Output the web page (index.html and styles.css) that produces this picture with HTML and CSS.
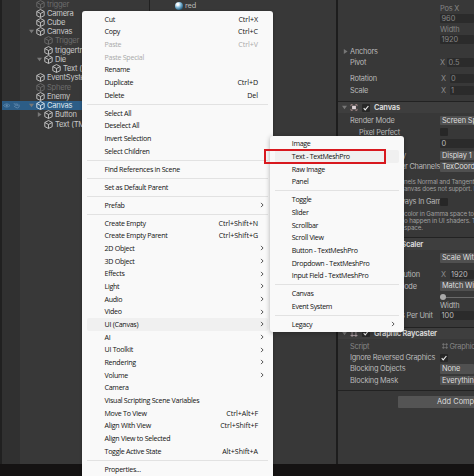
FILE: index.html
```html
<!DOCTYPE html>
<html lang="en">
<head>
<meta charset="utf-8">
<title>Editor</title>
<link rel="stylesheet" href="styles.css">
</head>
<body>
<svg class="defs" aria-hidden="true">
  <symbol id="cube" viewBox="0 0 8 8"><path d="M4 .5 7.3 2.2V5.9L4 7.5.7 5.9V2.2ZM.7 2.2 4 4 7.3 2.2M4 4V7.5" fill="none" stroke="currentColor" stroke-width=".8"/></symbol>
  <symbol id="check" viewBox="0 0 8 8"><path d="M1.7 4.2 3.2 5.8 6.4 2" fill="none" stroke="#eee" stroke-width="1.1"/></symbol>
  <symbol id="rect" viewBox="0 0 8 8"><path d="M0 1.8H8M0 6.2H8M1.8 0V8M6.2 0V8" fill="none" stroke="currentColor" stroke-width=".8"/></symbol>
  <symbol id="canvas" viewBox="0 0 8 8"><path d="M.5 2.5V.8H2.5M5.5 .8H7.5V2.5M7.5 5.5V7.2H5.5M2.5 7.2H.5V5.5" fill="none" stroke="#b99" stroke-width=".9"/><rect x="1.8" y="2" width="4.4" height="4" fill="#ddd0d4"/></symbol>
  <symbol id="chev" viewBox="0 0 4 6"><path d="M1 .9 3.1 3 1 5.1" fill="none" stroke="#222" stroke-width=".75"/></symbol>
</svg>
<div class="editor">
  <section class="tree" id="tree"></section>
  <section class="project"><i class="ball"></i><span>red</span></section>
  <section class="inspector" id="inspector"></section>
</div>
<nav class="menu main" id="main"></nav>
<nav class="menu sub" id="sub"></nav>
<div class="callout"></div>
<script src="app.js"></script>
</body>
</html>
```
FILE: styles.css
```css
* { box-sizing: border-box; }
body { margin: 0; width: 474px; height: 476px; overflow: hidden; position: relative; background: #151313; font-family: Inter, "Liberation Sans", sans-serif; }
.defs { position: absolute; width: 0; height: 0; }
.editor { display: flex; height: 464px; background: #383838; border-left: 2px solid #202020; }

.tree { width: 148px; border-right: 1px solid #202020; background: linear-gradient(to right, #303030 18px, #383838 18px); overflow: hidden; color: #c8c8c8; font-size: 7.6px; letter-spacing: -.26px; }
.node { height: 9.24px; display: flex; align-items: center; white-space: nowrap; }
.node:first-child { margin-top: -.6px; }
.node .vis { width: 18px; flex: none; display: flex; gap: 2px; padding-left: 1px; color: #648caf; }
.node .vis svg { width: 8px; height: 7px; }
.node.d0 { --in: 8px; } .node.d1 { --in: 16px; } .node.d2 { --in: 24px; }
.node .fold { width: 8px; margin-left: var(--in); flex: none; font-size: 0; display: flex; }
.fold svg, .foldrow svg { width: 5px; height: 5px; margin-left: 1px; fill: #777; }
.node .cube { width: 9px; height: 9px; margin-right: 2px; flex: none; }
.node.off { color: #6c6c6c; }
.node.sel { background: #2c5d87; color: #dce6ee; }

.project { width: 188px; border-right: 2px solid #1d1d1d; padding: 2px 0 0 25px; display: flex; align-items: flex-start; gap: 2px; color: #bbb; font-size: 7.3px; line-height: 8px; letter-spacing: -.1px; }
.ball { width: 8px; height: 8px; border-radius: 50%; background: radial-gradient(circle at 35% 30%, #fff 12%, #83b9d8 40%, #276183 75%); }

.inspector { width: 136px; flex: none; overflow: hidden; color: #b9b9b9; font-size: 7.4px; letter-spacing: -.22px; }
.row { display: flex; align-items: center; white-space: nowrap; padding-left: 12px; }
.row .label { width: 90px; flex: none; overflow: hidden; }
.row.indent .label { padding-left: 9px; }
.row.fit .label { letter-spacing: -.25px; }
.row.arrow .label { overflow: visible; }
.row .x { width: 7px; color: #8b8b8b; flex: none; }
.row.wide .x { width: 9.5px; padding-left: 1px; }
.dim { color: #858585; }
.field { width: 80px; height: 9px; line-height: 9px; background: #2b2b2b; border-radius: 1px; padding-left: 1.5px; letter-spacing: 0; }
.drop { width: 80px; height: 9.5px; line-height: 9.5px; background: #505050; color: #dedede; border-radius: 1px; padding-left: 2px; letter-spacing: -.12px; }
.box { width: 8px; height: 8px; background: #272727; border-radius: 1px; flex: none; }
.box svg { display: block; width: 8px; height: 8px; }
.head { background: #3e3e3e; border-top: 1px solid #222; font-weight: 700; color: #d4d4d4; padding-left: 4px; font-size: 7.4px; letter-spacing: -.2px; }
.head .fold { width: 8px; display: flex; }
.head .fold svg { margin-left: 0; }
.head .ico { width: 8px; height: 7px; color: #c8b6bc; margin-right: 4px; }
.head .box { margin-right: 4px; }
.foldrow { display: inline-block; width: 8px; margin-left: -8px; }
.help { padding: 1px 0 0 66px; font-size: 6.2px; line-height: 7px; letter-spacing: -.12px; color: #a0a0a0; white-space: pre; }
.slider { width: 80px; height: 1px; background: #6a6a6a; display: flex; align-items: center; }
.slider i { width: 6px; height: 6px; border-radius: 50%; background: #aaa; flex: none; }
.row .mini { width: 6px; height: 6px; margin: 0 1.5px 0 2px; flex: none; }
.end { border-top: 1px solid #222; display: flex; padding: 5px 0 0 60px; }
.add { width: 110px; height: 12px; line-height: 12px; background: #545454; color: #dcdcdc; padding-left: 39px; flex: none; border-radius: 1px; letter-spacing: 0; }

.menu { position: absolute; background: #f9f9f9; color: #111; font: 7.1px/12.68px "Open Sans", "Noto Sans", sans-serif; letter-spacing: -.28px; box-shadow: 0 1px 3px rgba(0, 0, 0, .35); }
.main { left: 82px; top: 11px; width: 191px; height: 466px; padding: 1.8px 5px 0; border-radius: 3px 3px 0 0; }
.sub { left: 270px; top: 136px; width: 134px; height: 196px; padding: 1.4px 5px 0; border-radius: 3px; box-shadow: 0 1px 5px rgba(0, 0, 0, .3); }
.item { height: 12.68px; display: flex; align-items: center; padding: 0 8px 0 17.5px; white-space: nowrap; border-radius: 2px; }
.sub .item { padding-left: 16.8px; letter-spacing: -.32px; }
.item .key { margin-left: auto; margin-right: 2px; letter-spacing: -.05px; }
.item .chev { margin-left: auto; width: 4px; height: 6px; margin-right: -3.5px; }
.item.off { color: #aaa; }
.item.on { background: #f0f0f0; }
.sep { height: 5.3px; display: flex; align-items: center; }
.sep::before { content: ""; height: 1px; flex: 1; background: #e2e2e2; }
.callout { position: absolute; left: 264px; top: 149px; width: 122px; height: 15px; border: 2px solid #d8191f; }
```
FILE: app.js
```js
const icon = (id, cls) => `<svg class="${cls}"><use href="#${id}"/></svg>`;
const down = '<svg viewBox="0 0 6 6"><path d="M0 1H6L3 5Z"/></svg>';
const right = '<svg viewBox="0 0 6 6"><path d="M1 0 5.5 3 1 6Z"/></svg>';
const eye = '<svg viewBox="0 0 8 7"><path d="M.5 3.5Q4 0 7.5 3.5 4 7 .5 3.5Z" fill="none" stroke="currentColor" stroke-width=".8"/><circle cx="4" cy="3.5" r="1.2" fill="currentColor"/></svg>';
const hand = '<svg viewBox="0 0 8 7"><path d="M1 1 3 3.5M3.3 1V4M5 1.5V4M6.5 2.5V5Q5 7 3 5.5L1 4" fill="none" stroke="currentColor" stroke-width=".9"/></svg>';

// [depth, label, fold, state]
const nodes = [
  [0, 'trigger', '', 'off'], [0, 'Camera'], [0, 'Cube'], [0, 'Canvas', down],
  [1, 'Trigger', '', 'off'], [1, 'triggertrigger'], [1, 'Die', down], [2, 'Text (TMP)'],
  [0, 'EventSystem'], [0, 'Sphere', '', 'off'], [0, 'Enemy'], [0, 'Canvas', down, 'sel'],
  [1, 'Button', right], [1, 'Text (TMP)']
];
document.getElementById('tree').innerHTML = nodes.map(([d, t, f = '', s = '']) =>
  `<div class="node d${d} ${s}"><span class="vis">${s === 'sel' ? eye + hand : ''}</span><span class="fold">${f}</span>${icon('cube', 'cube')}<span>${t}</span></div>`).join('');

const menu = (id, rows) => {
  document.getElementById(id).innerHTML = rows.map(r => {
    if (r === '-') return '<div class="sep"></div>';
    const [t, k = '', s = ''] = r.split('|');
    const tail = k === '>' ? icon('chev', 'chev') : k ? `<span class="key">${k}</span>` : '';
    return `<div class="item ${s}"><span>${t}</span>${tail}</div>`;
  }).join('');
};
menu('main', ['Cut|Ctrl+X', 'Copy|Ctrl+C', 'Paste|Ctrl+V|off', 'Paste Special||off', 'Rename', 'Duplicate|Ctrl+D', 'Delete|Del', '-',
  'Select All', 'Deselect All', 'Invert Selection', 'Select Children', '-', 'Find References in Scene', '-', 'Set as Default Parent', '-', 'Prefab|>', '-',
  'Create Empty|Ctrl+Shift+N', 'Create Empty Parent|Ctrl+Shift+G', '2D Object|>', '3D Object|>', 'Effects|>', 'Light|>', 'Audio|>', 'Video|>',
  'UI (Canvas)|>|on', 'AI|>', 'UI Toolkit|>', 'Rendering|>', 'Volume|>', 'Camera', 'Visual Scripting Scene Variables',
  'Move To View|Ctrl+Alt+F', 'Align With View|Ctrl+Shift+F', 'Align View to Selected', 'Toggle Active State|Alt+Shift+A', '-', 'Properties...']);
menu('sub', ['Image', 'Text - TextMeshPro||on', 'Raw Image', 'Panel', '-', 'Toggle', 'Slider', 'Scrollbar', 'Scroll View',
  'Button - TextMeshPro', 'Dropdown - TextMeshPro', 'Input Field - TextMeshPro', '-', 'Canvas', 'Event System', '-', 'Legacy|>']);

const row = (h, label, value = '', cls = '') => `<div class="row ${cls}" style="height:${h}px"><span class="label">${label}</span>${value}</div>`;
const field = v => `<span class="field">${v}</span>`;
const drop = v => `<span class="drop">${v}</span>`;
const box = on => `<span class="box">${on ? icon('check', '') : ''}</span>`;
const x = '<span class="x">X</span>';
const head = (h, t, i = 'rect') => `<div class="row head" style="height:${h}px"><span class="fold">${down}</span>${icon(i, 'ico')}${box(true)}<span>${t}</span></div>`;
const help = (h, t) => `<div class="help" style="height:${h}px">${t}</div>`;
document.getElementById('inspector').innerHTML = [
  row(3, ''),
  row(10.5, '', 'Pos X', 'dim'), row(10.5, '', field('960'), 'dim'), row(10.5, '', 'Width', 'dim'), row(10.5, '', field('1920'), 'dim'),
  row(12, `<span class="foldrow">${right}</span>Anchors`, '', 'arrow'),
  row(11.5, 'Pivot', x + field('<span class="dim">0.5</span>')),
  row(4, ''),
  row(12, 'Rotation', x + field('<span class="dim">0</span>'), 'wide'), row(11.5, 'Scale', x + field('<span class="dim">1</span>'), 'wide'),
  row(5, ''), head(12, 'Canvas', 'canvas'), row(1.5, ''),
  row(12, 'Render Mode', drop('Screen Space')), row(11.5, 'Pixel Perfect', box(false), 'indent'), row(11.5, 'Sort Order', field('0'), 'indent'),
  row(11.5, 'Target Display', drop('Display 1'), 'indent'), row(11.5, 'Additional Shader Channels', drop('TexCoord1'), 'fit'),
  row(4, ''),
  help(20.5, 'nels Normal and Tangent\nanvas does not support. It'),
  row(9, 'Vertex Color Always In Gamma', box(false)), row(3, ''),
  help(28, 'color in Gamma space to\no happen in UI shaders. This\nspace.'),
  head(13, 'Canvas Scaler'), row(1.5, ''),
  row(13, 'UI Scale Mode', drop('Scale With')), row(4, ''), row(12, 'Reference Resolution', x + field('1920'), 'wide'),
  row(11, 'Screen Match Mode', drop('Match Width')), row(11, '', '<span class="slider"><i></i></span>'), row(5.5, '', '<span>Width</span>'),
  row(15, 'Reference Pixels Per Unit', field('100')), row(3.5, ''),
  head(12, 'Graphic Raycaster'), row(1.5, ''),
  row(12, 'Script', icon('rect', 'mini') + 'Graphic', 'dim'), row(11, 'Ignore Reversed Graphics', box(true)),
  row(11.5, 'Blocking Objects', drop('None')), row(11.5, 'Blocking Mask', drop('Everything')), row(4, ''),
  '<div class="end"><span class="add">Add Component</span></div>'
].join('');
```
